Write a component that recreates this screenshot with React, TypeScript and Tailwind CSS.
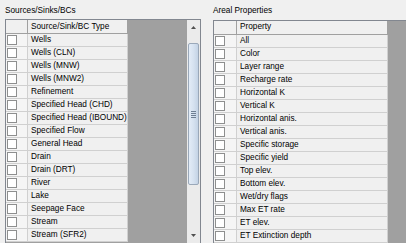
const SOURCES = [
  "Wells",
  "Wells (CLN)",
  "Wells (MNW)",
  "Wells (MNW2)",
  "Refinement",
  "Specified Head (CHD)",
  "Specified Head (IBOUND)",
  "Specified Flow",
  "General Head",
  "Drain",
  "Drain (DRT)",
  "River",
  "Lake",
  "Seepage Face",
  "Stream",
  "Stream (SFR2)",
];

const PROPS = [
  "All",
  "Color",
  "Layer range",
  "Recharge rate",
  "Horizontal K",
  "Vertical K",
  "Horizontal anis.",
  "Vertical anis.",
  "Specific storage",
  "Specific yield",
  "Top elev.",
  "Bottom elev.",
  "Wet/dry flags",
  "Max ET rate",
  "ET elev.",
  "ET Extinction depth",
];

function Check() {
  return <span className="block h-[10px] w-[10px] border border-[#8e8f8f] bg-white" />;
}

function Grid({ header, rows, textW, checkW }: { header: string; rows: string[]; textW: string; checkW: string }) {
  return (
    <div className="flex flex-col">
      {/* header row */}
      <div className="flex h-[14px] border-b border-[#a0a0a0]">
        <div className={`${checkW} border-r border-[#a0a0a0] bg-[#f0f0f0]`} />
        <div className={`${textW} flex items-center border-r border-[#a0a0a0] bg-[#f0f0f0] pl-[3px]`}>{header}</div>
      </div>
      {rows.map((r) => (
        <div key={r} className="flex h-[13px]">
          <div className={`${checkW} flex border-r border-b border-[#d0d0d0] bg-[#f5f5f5] pl-[1px] pt-[1px]`}>
            <Check />
          </div>
          <div className={`${textW} flex items-center border-r border-b border-[#d0d0d0] bg-[#f0f0f0] pl-[3px]`}>{r}</div>
        </div>
      ))}
    </div>
  );
}

export default function App() {
  return (
    <div
      className="flex h-[243px] w-[406px] overflow-hidden bg-[#f0f0f0] text-[8.25px] leading-none text-black"
      style={{ fontFamily: '"Liberation Sans", Arial, sans-serif' }}
    >
      {/* left: sources / sinks */}
      <div className="flex w-[213px] shrink-0 flex-col pl-[5px]">
        <div className="flex h-[20px] items-center pt-[2px]">Sources/Sinks/BCs</div>
        <div className="flex h-[230px] w-[196px] border-t border-l border-r border-[#828790]">
          <div className="flex-1 bg-[#a0a0a0]">
            <Grid header="Source/Sink/BC Type" rows={SOURCES} checkW="w-[22px]" textW="w-[100px]" />
          </div>
          {/* vertical scrollbar */}
          <div className="flex w-[13px] flex-col items-center bg-[#ebebeb]">
            <div className="flex h-[14px] w-full items-center justify-center">
              <svg width="5" height="3" viewBox="0 0 5 3">
                <path d="M0 3 L2.5 0 L5 3 Z" fill="#505050" />
              </svg>
            </div>
            <div className="mt-[9px] flex h-[142px] w-[11px] items-center justify-center rounded-[2px] border border-[#9aa8b9] bg-gradient-to-r from-[#e3ecf7] via-[#d6e2f0] to-[#c4d3e5]">
              <div className="flex flex-col gap-[1px]">
                <span className="block h-[1px] w-[5px] bg-[#6f7f93]" />
                <span className="block h-[1px] w-[5px] bg-[#6f7f93]" />
                <span className="block h-[1px] w-[5px] bg-[#6f7f93]" />
                <span className="block h-[1px] w-[5px] bg-[#6f7f93]" />
              </div>
            </div>
            <div className="flex-1" />
            <div className="flex h-[14px] w-full items-center justify-center">
              <svg width="5" height="3" viewBox="0 0 5 3">
                <path d="M0 0 L2.5 3 L5 0 Z" fill="#505050" />
              </svg>
            </div>
            <div className="h-[1px]" />
          </div>
        </div>
      </div>
      {/* right: areal properties */}
      <div className="flex flex-1 flex-col">
        <div className="flex h-[20px] items-center pt-[2px]">Areal Properties</div>
        <div className="flex h-[230px] flex-1 border-t border-l border-[#828790]">
          <div className="flex-1 bg-[#a0a0a0]">
            <Grid header="Property" rows={PROPS} checkW="w-[23px]" textW="w-[151px]" />
          </div>
        </div>
      </div>
    </div>
  );
}
